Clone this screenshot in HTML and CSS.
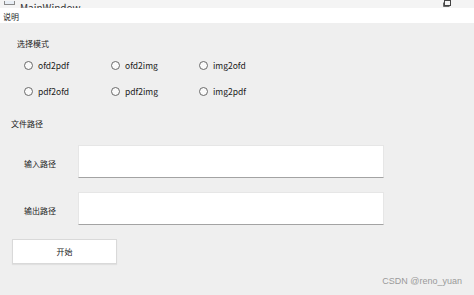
FILE: index.html
```html
<!DOCTYPE html>
<html lang="zh">
<head>
<meta charset="utf-8">
<title>MainWindow</title>
<link rel="stylesheet" href="styles.css">
</head>
<body>
<div class="window">
  <div class="titlebar">
    <span class="app-icon"></span>
    <span class="title">MainWindow</span>
    <span class="spacer"></span>
    <svg class="restore" width="10" height="7" viewBox="0 0 10 7"><rect x="2.5" y="0.5" width="6" height="5" fill="none" stroke="#444" stroke-width="1"/><path d="M1.5 2.5v4h6" fill="none" stroke="#444" stroke-width="0.8"/></svg>
  </div>
  <div class="menubar"><span class="menu-item">说明</span></div>
  <div class="content">
    <div class="group-title mode-title">选择模式</div>
    <div class="radio-grid">
      <label class="radio"><span class="dot"></span>ofd2pdf</label>
      <label class="radio"><span class="dot"></span>ofd2img</label>
      <label class="radio"><span class="dot"></span>img2ofd</label>
      <label class="radio"><span class="dot"></span>pdf2ofd</label>
      <label class="radio"><span class="dot"></span>pdf2img</label>
      <label class="radio"><span class="dot"></span>img2pdf</label>
    </div>
    <div class="group-title path-title">文件路径</div>
    <div class="path-row">
      <span class="path-label">输入路径</span>
      <div class="path-input"></div>
    </div>
    <div class="path-row second">
      <span class="path-label">输出路径</span>
      <div class="path-input"></div>
    </div>
    <div class="start-btn">开始</div>
  </div>
  <div class="watermark">CSDN @reno_yuan</div>
</div>
</body>
</html>
```
FILE: styles.css
```css
html, body {
  margin: 0;
  padding: 0;
}
body {
  width: 474px;
  height: 295px;
  overflow: hidden;
  background: #efefef;
  font-family: "Noto Sans CJK SC", "Noto Sans", sans-serif;
  color: #1a1a1a;
}
.window {
  position: relative;
  width: 474px;
  height: 295px;
}
.titlebar {
  height: 8px;
  background: #f4f4f4;
  display: flex;
  align-items: flex-end;
  overflow: hidden;
  padding-left: 4px;
  padding-right: 22px;
}
.app-icon {
  width: 9px;
  height: 3px;
  border: 1px solid #8a8a8a;
  border-top: none;
  background: #e8eef5;
  margin-bottom: 3px;
}
.title {
  font-size: 10px;
  line-height: 10px;
  margin-left: 5px;
  margin-bottom: -5px;
  color: #333;
}
.spacer { flex: 1; }
.restore { margin-bottom: 1px; }
.menubar {
  height: 15px;
  background: #ffffff;
  padding-left: 3px;
  display: flex;
  align-items: center;
}
.menu-item {
  font-size: 8px;
  line-height: 10px;
  padding-top: 3px;
}
.content {
  display: flex;
  flex-direction: column;
  align-items: flex-start;
}
.group-title {
  font-size: 8px;
  line-height: 10px;
}
.mode-title {
  margin-top: 16px;
  margin-left: 17px;
}
.radio-grid {
  margin-top: 10px;
  margin-left: 24px;
  display: grid;
  grid-template-columns: 87px 88px 80px;
  row-gap: 14px;
}
.radio {
  display: flex;
  align-items: center;
  height: 12px;
  font-size: 8.5px;
  line-height: 12px;
}
.dot {
  width: 7px;
  height: 7px;
  border: 1px solid #6a6a6a;
  border-radius: 50%;
  background: #fafafa;
  margin-right: 5px;
  flex: none;
}
.path-title {
  margin-top: 22px;
  margin-left: 11px;
}
.path-row {
  margin-top: 16px;
  display: flex;
  align-items: center;
}
.path-row.second {
  margin-top: 14px;
}
.path-label {
  width: 54px;
  padding-left: 24px;
  padding-top: 4px;
  font-size: 8px;
  line-height: 10px;
}
.path-input {
  width: 304px;
  height: 31px;
  background: #ffffff;
  border: 1px solid #e6e6e6;
  border-bottom: 1px solid #a3a3a3;
}
.start-btn {
  margin-top: 14px;
  margin-left: 12px;
  width: 103px;
  height: 23px;
  background: #ffffff;
  border: 1px solid #d9d9d9;
  box-shadow: 0 1px 1px rgba(0,0,0,0.06);
  display: flex;
  align-items: center;
  justify-content: center;
  font-size: 8px;
  line-height: 10px;
}
.watermark {
  position: absolute;
  right: 12px;
  bottom: 9px;
  font-family: "Liberation Sans", Arial, sans-serif;
  font-size: 9px;
  color: #9a9a9a;
}
```
